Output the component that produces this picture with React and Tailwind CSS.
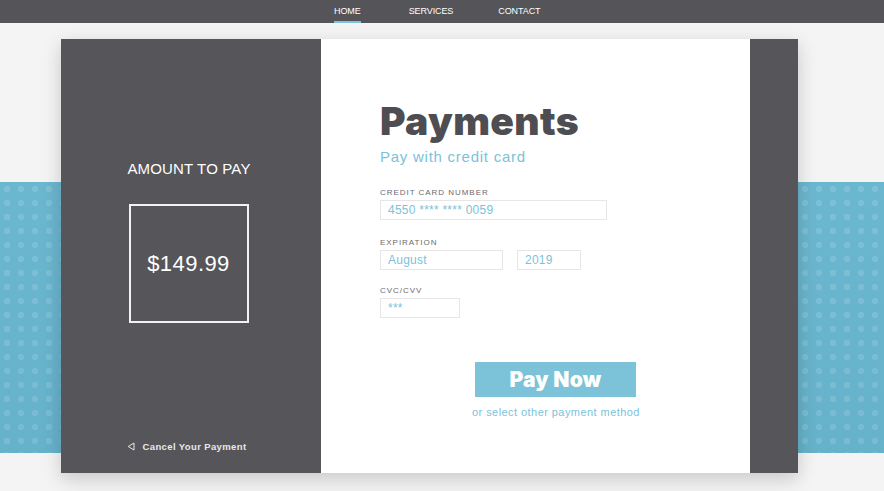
const dots =
  'radial-gradient(circle, rgba(255,255,255,0.12) 3px, transparent 3.5px)';

const Field = ({ label, value, width, className = '' }) => (
  <div className={className}>
    {label && (
      <div className="text-[8px] tracking-[0.12em] text-[#6b6b70] leading-none mb-[3px]">
        {label}
      </div>
    )}
    <div
      className={`${width} h-[20px] border border-[#e6e6e8] flex items-center px-[7px] text-[12px] text-[#7cc2d8] tracking-[0.02em]`}
    >
      {value}
    </div>
  </div>
);

const App = () => {
  return (
    <div className="w-[884px] h-[491px] overflow-hidden bg-[#f4f4f5] font-['Liberation_Sans',sans-serif]">
      {/* top nav */}
      <nav className="h-[23px] bg-[#545459] flex">
        <div className="flex pl-[334px] text-[9px] text-white leading-none tracking-[-0.01em]">
          <div className="relative pt-[7px]">
            HOME
            <div className="absolute left-0 right-0 top-[21px] h-[2px] bg-[#7cc2d8]" />
          </div>
          <div className="pt-[7px] ml-[48px]">SERVICES</div>
          <div className="pt-[7px] ml-[45px]">CONTACT</div>
        </div>
      </nav>

      <section className="relative h-[468px] bg-[linear-gradient(to_bottom,#f4f4f5_159px,#6cb7d0_159px,#66b2cb_430px,#f4f4f5_430px)]">
        <div
          className="absolute left-0 right-0 top-[159px] h-[271px] bg-[length:14px_14px]"
          style={{ backgroundImage: dots }}
        />
        <div className="relative ml-[61px] pt-[16px]">
          <div className="flex w-[737px] h-[434px] shadow-[0_6px_18px_rgba(0,0,0,0.18)]">
            {/* left panel */}
            <div className="w-[260px] bg-[#55555a] flex flex-col items-center text-white">
              <div className="mt-[122px] -ml-[4px] text-[15px] tracking-[0.01em] leading-none">
                AMOUNT TO PAY
              </div>
              <div className="mt-[28px] -ml-[5px] w-[120px] h-[119px] border-2 border-[#f2f2f2] flex items-center justify-center text-[22px] tracking-[0.02em]">
                $149.99
              </div>
              <div className="mt-auto mb-[19px] -ml-[8px] flex items-center gap-[7px] text-[9.5px] font-bold tracking-[0.04em] text-[#e8e8ea]">
                <svg width="8" height="9" viewBox="0 0 8 9" fill="none">
                  <path d="M7 1 L1.2 4.5 L7 8 Z" stroke="#e8e8ea" strokeWidth="1" strokeLinejoin="round" />
                </svg>
                Cancel Your Payment
              </div>
            </div>

            {/* white panel */}
            <div className="w-[429px] bg-white pl-[59px] flex flex-col">
              <h1 className="mt-[62px] text-[39px] font-black leading-none text-[#4d4d52] tracking-[0.01em] font-['Inter',sans-serif]">
                Payments
              </h1>
              <div className="mt-[9px] text-[15px] text-[#7cc2d8] tracking-[0.05em] leading-none">
                Pay with credit card
              </div>
              <Field
                className="mt-[25px]"
                label="CREDIT CARD NUMBER"
                value="4550 **** **** 0059"
                width="w-[227px]"
              />
              <div className="mt-[19px] text-[8px] tracking-[0.12em] text-[#6b6b70] leading-none mb-[3px]">
                EXPIRATION
              </div>
              <div className="flex gap-[14px]">
                <Field value="August" width="w-[123px]" />
                <Field value="2019" width="w-[64px]" />
              </div>
              <Field
                className="mt-[17px]"
                label="CVC/CVV"
                value="***"
                width="w-[80px]"
              />
              <div className="ml-[95px] mt-[44px] w-[161px] h-[35px] bg-[#7cc2d8] flex items-center justify-center text-white text-[21px] font-black font-['Inter',sans-serif] tracking-[0.01em]">
                Pay Now
              </div>
              <div className="ml-[92px] mt-[7px] text-[11px] text-[#7cc2d8] tracking-[0.04em]">
                or select other payment method
              </div>
            </div>

            {/* right strip */}
            <div className="w-[48px] bg-[#55555a]" />
          </div>
        </div>
      </section>
    </div>
  );
};

export default App;
